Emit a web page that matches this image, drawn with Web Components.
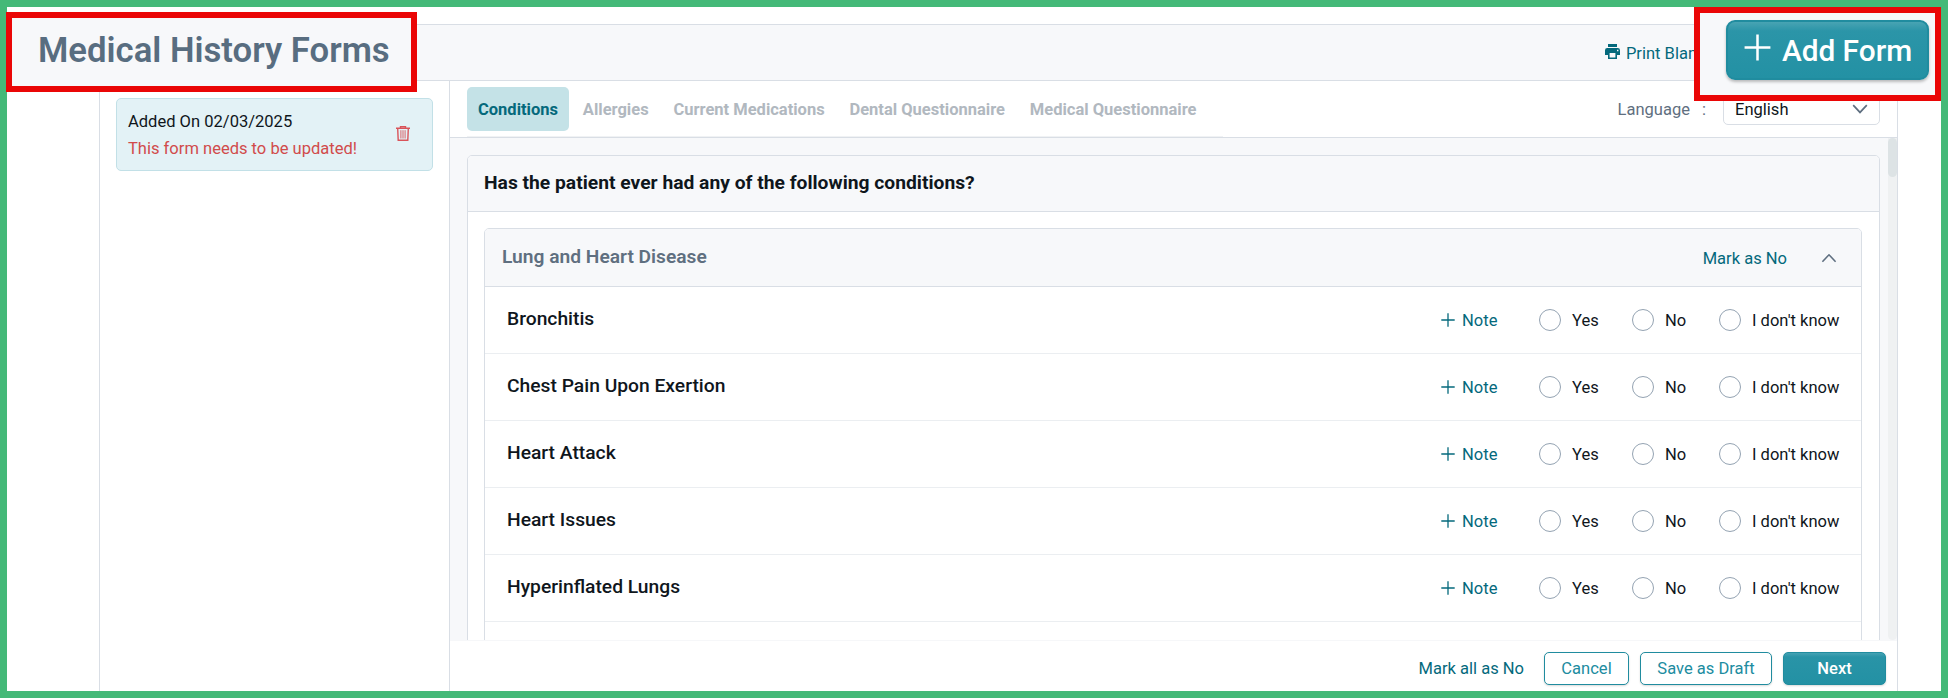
<!DOCTYPE html>
<html lang="en">
<head>
<meta charset="utf-8">
<title>Medical History Forms</title>
<style>
   body {
      margin: 0;
      font-family: Roboto, "Liberation Sans", sans-serif;
      font-size: 16.55px;
      color: #0f161c;
      --line: #d9dee5;
      --panel: #f7f8fa;
      --teal: #04697c;
      --slate: #5f6f80;
   }
</style>
</head>
<body>
<forms-page></forms-page>

<script>
   const ICONS = {
      plus: '<svg viewBox="0 0 14 14"><path d="M7 .3v13.4M.3 7h13.4" stroke="currentColor" stroke-width="1.3" fill="none"/></svg>',
      down: '<svg viewBox="0 0 16 16"><path d="M1.2 4.2L8 11.4l6.8-7.2" stroke="currentColor" stroke-width="1.7" fill="none"/></svg>',
      up: '<svg viewBox="0 0 16 16"><path d="M1.4 11.8L8 4.8l6.6 7" stroke="currentColor" stroke-width="1.6" fill="none"/></svg>',
      trash: '<svg viewBox="0 0 14 15"><path d="M0 2.2h14M4.5 1.8V.6h5v1.2M1.7 2.5l.5 11.8h9.6l.5-11.8" stroke="currentColor" stroke-width="1.4" fill="none"/><path d="M4.9 4.2v8.3M7 4.2v8.3M9.1 4.2v8.3" stroke="currentColor" stroke-width=".9"/></svg>',
      print: '<svg viewBox="0 0 15 15"><path fill="currentColor" d="M3 0h9v3H3zM2.3 4h10.4A2.3 2.3 0 0 1 15 6.3V11h-3v4H3v-4H0V6.3A2.3 2.3 0 0 1 2.3 4zM4.6 9v4.4h5.8V9zM12 5.8v1.4h1.4V5.8z" fill-rule="evenodd"/></svg>'
   };

   // icon by name, the box is sized by its user
   class AppIcon extends HTMLElement {
      constructor() {
         super();
         this.attachShadow({ mode: 'open' });
      }

      connectedCallback() {
         this.shadowRoot.innerHTML = `
            <style>
               :host { display: block; flex: none; }
               svg { display: block; width: 100%; height: 100%; }
            </style>
            ${ICONS[this.getAttribute('name')]}
         `;
      }
   }
   customElements.define('app-icon', AppIcon);

   class AppButton extends HTMLElement {
      constructor() {
         super();
         this.attachShadow({ mode: 'open' });
         this.shadowRoot.innerHTML = `
            <style>
               :host {
                  display: flex;
                  align-items: center;
                  justify-content: center;
                  box-sizing: border-box;
                  height: 33px;
                  border: 1px solid #208c9f;
                  border-radius: 5px;
                  background: #fff;
                  color: #208c9f;
                  box-shadow: 0 1px 2px rgba(0, 0, 0, .15);
                  white-space: nowrap;
               }
               :host([primary]) {
                  background: linear-gradient(#45a2b3, #2994a7 4px, #2391a4);
                  color: #fff;
                  font-weight: 500;
               }
               :host([large]) {
                  width: 203px;
                  height: 60px;
                  border-width: 2px;
                  border-radius: 9px;
                  background: linear-gradient(#48a3b3, #2b95a8 9px, #2391a4);
                  font-size: 29.8px;
                  box-shadow: 0 2px 3px rgba(0, 0, 0, .25);
               }
            </style>
            <slot></slot>
         `;
      }
   }
   customElements.define('app-button', AppButton);

   // red frame that lies over the page
   class CalloutBox extends HTMLElement {
      constructor() {
         super();
         this.attachShadow({ mode: 'open' });
         this.shadowRoot.innerHTML = `
            <style>
               :host {
                  display: flex;
                  position: absolute;
                  box-sizing: border-box;
                  border: 6px solid #ea0606;
                  background: var(--panel);
                  white-space: nowrap;
               }
            </style>
            <slot></slot>
         `;
      }
   }
   customElements.define('callout-box', CalloutBox);

   class FormCard extends HTMLElement {
      constructor() {
         super();
         this.attachShadow({ mode: 'open' });
         this.shadowRoot.innerHTML = `
            <style>
               :host {
                  display: flex;
                  align-items: center;
                  justify-content: space-between;
                  box-sizing: border-box;
                  height: 73px;
                  padding: 0 22px 0 11px;
                  border: 1px solid #c2e0e7;
                  border-radius: 5px;
                  background: #e3f2f6;
                  line-height: 27px;
               }
               .note { color: #d14b4b; }
               app-icon { width: 14px; height: 15px; margin-bottom: 2px; color: #d9545a; }
            </style>
            <div>
               <div><slot></slot></div>
               <div class="note"><slot name="note"></slot></div>
            </div>
            <app-icon name="trash"></app-icon>
         `;
      }
   }
   customElements.define('form-card', FormCard);

   class TabItem extends HTMLElement {
      constructor() {
         super();
         this.attachShadow({ mode: 'open' });
         this.shadowRoot.innerHTML = `
            <style>
               :host {
                  display: flex;
                  align-items: center;
                  height: 44px;
                  padding: 0 11px;
                  border-radius: 5px;
                  color: #b1b8bf;
                  font-weight: 700;
                  font-size: 16.5px;
                  white-space: nowrap;
               }
               :host([active]) { background: #c4e2e7; color: var(--teal); }
            </style>
            <slot></slot>
         `;
      }
   }
   customElements.define('tab-item', TabItem);

   class RadioOption extends HTMLElement {
      constructor() {
         super();
         this.attachShadow({ mode: 'open' });
         this.shadowRoot.innerHTML = `
            <style>
               :host { display: flex; align-items: center; gap: 11px; white-space: nowrap; }
               i {
                  flex: none;
                  box-sizing: border-box;
                  width: 22px;
                  height: 22px;
                  border: 1px solid #94a3b2;
                  border-radius: 50%;
               }
            </style>
            <i></i><slot></slot>
         `;
      }
   }
   customElements.define('radio-option', RadioOption);

   class ConditionRow extends HTMLElement {
      constructor() {
         super();
         this.attachShadow({ mode: 'open' });
         this.shadowRoot.innerHTML = `
            <style>
               :host {
                  display: grid;
                  grid-template-columns: 1fr 98px 93px 87px 121px;
                  align-items: center;
                  box-sizing: border-box;
                  height: 67px;
                  padding: 0 21px 0 22px;
                  border-bottom: 1px solid #ebeef1;
               }
               .name { font-weight: 500; font-size: 19.25px; padding-bottom: 4px; }
               .note { display: flex; align-items: center; gap: 7px; color: var(--teal); }
               app-icon { width: 14px; height: 14px; }
            </style>
            <div class="name"><slot></slot></div>
            <div class="note"><app-icon name="plus"></app-icon>Note</div>
            <radio-option>Yes</radio-option>
            <radio-option>No</radio-option>
            <radio-option>I don't know</radio-option>
         `;
      }
   }
   customElements.define('condition-row', ConditionRow);

   // collapsible group of conditions
   class ConditionGroup extends HTMLElement {
      constructor() {
         super();
         this.attachShadow({ mode: 'open' });
         this.shadowRoot.innerHTML = `
            <style>
               :host {
                  display: block;
                  border: 1px solid var(--line);
                  border-radius: 5px;
                  overflow: hidden;
               }
               header {
                  display: flex;
                  align-items: center;
                  height: 57px;
                  padding: 0 24px 0 17px;
                  border-bottom: 1px solid var(--line);
                  background: var(--panel);
               }
               .title {
                  flex: 1;
                  padding-bottom: 2px;
                  color: var(--slate);
                  font-weight: 600;
                  font-size: 19.2px;
               }
               .mark { color: var(--teal); margin-right: 34px; padding-top: 2px; }
               app-icon { width: 16px; height: 16px; color: var(--slate); }
            </style>
            <header>
               <div class="title"><slot name="title"></slot></div>
               <div class="mark">Mark as No</div>
               <app-icon name="up"></app-icon>
            </header>
            <slot></slot>
         `;
      }
   }
   customElements.define('condition-group', ConditionGroup);

   class FormsPage extends HTMLElement {
      constructor() {
         super();
         this.attachShadow({ mode: 'open' });
         this.shadowRoot.innerHTML = `
            <style>
               :host {
                  display: flex;
                  position: relative;
                  box-sizing: border-box;
                  width: 1948px;
                  height: 698px;
                  padding: 17px 43px 0 92px;
                  border: 7px solid #44b978;
                  background: #fff;
               }
               .window {
                  flex: 1;
                  display: flex;
                  flex-direction: column;
                  border: 1px solid var(--line);
                  border-bottom: 0;
               }
               .top {
                  display: flex;
                  align-items: center;
                  justify-content: flex-end;
                  gap: 6px;
                  box-sizing: border-box;
                  height: 56px;
                  padding: 2px 149px 0 0;
                  border-bottom: 1px solid var(--line);
                  background: var(--panel);
                  color: var(--teal);
               }
               .top app-icon { width: 15px; height: 15px; margin-bottom: 4px; }
               .columns { flex: 1; display: flex; min-height: 0; }
               aside {
                  box-sizing: border-box;
                  width: 350px;
                  padding: 17px 16px;
                  border-right: 1px solid var(--line);
               }
               main { flex: 1; display: flex; flex-direction: column; min-width: 0; }
               .bar {
                  display: flex;
                  align-items: flex-start;
                  height: 56px;
                  padding: 0 17px;
                  border-bottom: 1px solid var(--line);
               }
               nav {
                  display: flex;
                  gap: 2.8px;
                  box-sizing: border-box;
                  width: 756px;
                  height: 56px;
                  padding-top: 6px;
                  border-bottom: 1px solid #f0f2f4;
               }
               .language {
                  display: flex;
                  align-items: center;
                  margin: 12px 0 0 auto;
                  color: var(--slate);
               }
               .language b { font-weight: 400; margin: 0 17px 0 12px; }
               .select {
                  display: flex;
                  align-items: center;
                  justify-content: space-between;
                  box-sizing: border-box;
                  width: 157px;
                  height: 32px;
                  padding: 0 11px;
                  border: 1px solid var(--line);
                  border-radius: 5px;
                  color: #0f161c;
               }
               .select app-icon { width: 16px; height: 16px; color: var(--slate); }
               .scroller { flex: 1; display: flex; min-height: 0; background: var(--panel); }
               .content { flex: 1; padding: 17px 8px 0 17px; overflow: hidden; }
               .question { border: 1px solid var(--line); border-radius: 5px; background: #fff; overflow: hidden; }
               .question h2 {
                  display: flex;
                  align-items: center;
                  height: 53px;
                  margin: 0;
                  padding: 0 16px 2px;
                  border-bottom: 1px solid var(--line);
                  background: var(--panel);
                  font-size: 19.25px;
                  font-weight: 700;
               }
               .question condition-group { margin: 16px 17px 0 16px; }
               .track { width: 9px; border-radius: 0 0 5px 5px; background: #eff1f2; }
               .thumb { height: 39px; border-radius: 5px; background: #dde3e5; }
               footer {
                  display: flex;
                  align-items: flex-start;
                  justify-content: flex-end;
                  gap: 11px;
                  box-sizing: border-box;
                  height: 51px;
                  padding: 11px 11px 0 0;
                  border-top: 1px solid #f6f7f9;
               }
               .all { color: var(--teal); margin-right: 9px; line-height: 33px; }
               .heading { left: -1px; top: 5px; width: 411px; height: 80px; align-items: center; }
               .heading h1 {
                  margin: 0 0 4px 26px;
                  color: #586d80;
                  font-size: 34.7px;
                  font-weight: 600;
                  line-height: 1;
               }
               .add { left: 1687px; top: 0; width: 247px; height: 94px; }
               .add app-button { margin: 7px 0 0 26px; }
               .add app-icon { width: 27px; height: 27px; margin: -5px 11px 0 1px; }
            </style>
            <div class="window">
               <div class="top"><app-icon name="print"></app-icon>Print Blank Form</div>
               <div class="columns">
                  <aside>
                     <form-card>Added On 02/03/2025<span slot="note">This form needs to be updated!</span></form-card>
                  </aside>
                  <main>
                     <div class="bar">
                        <nav>
                           <tab-item active>Conditions</tab-item>
                           <tab-item>Allergies</tab-item>
                           <tab-item>Current Medications</tab-item>
                           <tab-item>Dental Questionnaire</tab-item>
                           <tab-item>Medical Questionnaire</tab-item>
                        </nav>
                        <div class="language">
                           Language<b>:</b>
                           <div class="select">English<app-icon name="down"></app-icon></div>
                        </div>
                     </div>
                     <div class="scroller">
                        <div class="content">
                           <div class="question">
                              <h2>Has the patient ever had any of the following conditions?</h2>
                              <condition-group>
                                 <span slot="title">Lung and Heart Disease</span>
                                 <condition-row>Bronchitis</condition-row>
                                 <condition-row>Chest Pain Upon Exertion</condition-row>
                                 <condition-row>Heart Attack</condition-row>
                                 <condition-row>Heart Issues</condition-row>
                                 <condition-row>Hyperinflated Lungs</condition-row>
                                 <div style="height: 67px"></div>
                              </condition-group>
                           </div>
                        </div>
                        <div class="track"><div class="thumb"></div></div>
                     </div>
                     <footer>
                        <span class="all">Mark all as No</span>
                        <app-button style="width: 85px">Cancel</app-button>
                        <app-button style="width: 132px">Save as Draft</app-button>
                        <app-button primary style="width: 103px">Next</app-button>
                     </footer>
                  </main>
               </div>
            </div>
            <callout-box class="heading"><h1>Medical History Forms</h1></callout-box>
            <callout-box class="add"><app-button primary large><app-icon name="plus"></app-icon>Add Form</app-button></callout-box>
         `;
      }
   }
   customElements.define('forms-page', FormsPage);
</script>
</body>
</html>
